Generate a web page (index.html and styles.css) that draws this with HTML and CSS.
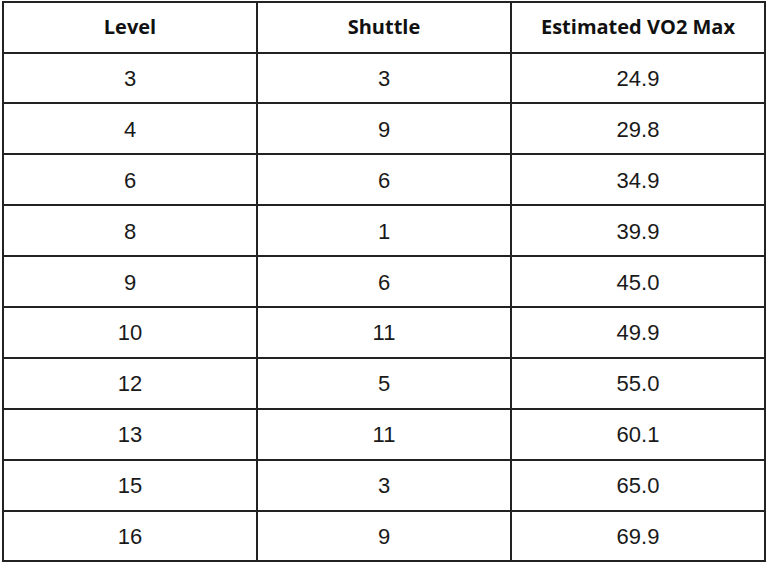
FILE: index.html
```html
<!DOCTYPE html>
<html>
<head>
<meta charset="utf-8">
<link rel="stylesheet" href="styles.css">
</head>
<body>
<table class="vo2">
  <thead>
    <tr><th>Level</th><th>Shuttle</th><th>Estimated VO2 Max</th></tr>
  </thead>
  <tbody>
    <tr><td>3</td><td>3</td><td>24.9</td></tr>
    <tr><td>4</td><td>9</td><td>29.8</td></tr>
    <tr><td>6</td><td>6</td><td>34.9</td></tr>
    <tr><td>8</td><td>1</td><td>39.9</td></tr>
    <tr><td>9</td><td>6</td><td>45.0</td></tr>
    <tr><td>10</td><td>11</td><td>49.9</td></tr>
    <tr><td>12</td><td>5</td><td>55.0</td></tr>
    <tr><td>13</td><td>11</td><td>60.1</td></tr>
    <tr><td>15</td><td>3</td><td>65.0</td></tr>
    <tr><td>16</td><td>9</td><td>69.9</td></tr>
  </tbody>
</table>
</body>
</html>
```
FILE: styles.css
```css
html, body {
  margin: 0;
  padding: 0;
  background: #ffffff;
}
.vo2 {
  border-collapse: collapse;
  margin: 1px 0 0 2px;
  width: 764px;
  table-layout: fixed;
}
.vo2 th, .vo2 td {
  border: 2px solid #222222;
  text-align: center;
  vertical-align: middle;
  padding: 0;
  width: 33.33%;
  line-height: 1;
}
.vo2 th {
  height: 48.5px;
  font-family: "Open Sans", "Noto Sans", sans-serif;
  font-weight: 700;
  font-size: 20px;
  color: #111111;
}
.vo2 td {
  height: 46.9px;
  padding-top: 2px;
  font-family: "Liberation Sans", Arial, sans-serif;
  font-size: 22px;
  color: #1a1a1a;
}
```
